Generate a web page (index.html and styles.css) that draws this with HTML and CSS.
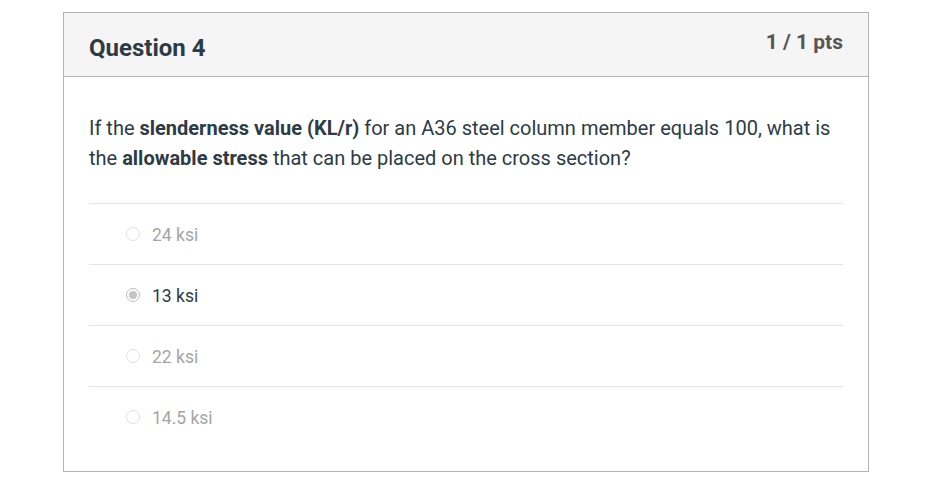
FILE: index.html
```html
<!DOCTYPE html>
<html>
<head>
<meta charset="utf-8">
<link rel="stylesheet" href="styles.css">
</head>
<body>
<div class="card">
  <div class="card-header">
    <h2 class="title">Question 4</h2>
    <div class="pts">1 / 1 pts</div>
  </div>
  <div class="card-body">
    <p class="question">If the <strong>slenderness value (KL/r)</strong> for an A36 steel column member equals 100, what is the <strong>allowable stress</strong> that can be placed on the cross section?</p>
    <div class="answers">
      <div class="answer"><span class="radio"></span><span class="label">24 ksi</span></div>
      <div class="answer selected"><span class="radio"></span><span class="label">13 ksi</span></div>
      <div class="answer"><span class="radio"></span><span class="label">22 ksi</span></div>
      <div class="answer"><span class="radio"></span><span class="label">14.5 ksi</span></div>
    </div>
  </div>
</div>
</body>
</html>
```

FILE: styles.css
```css
html, body {
  margin: 0;
  padding: 0;
  background: #fff;
}
body {
  font-family: Roboto, "Liberation Sans", sans-serif;
  color: #2d3b45;
}
.card {
  margin: 12px 0 0 63px;
  width: 804px;
  border: 1px solid #b3b3b3;
}
.card-header {
  background: #f5f5f5;
  border-bottom: 1px solid #b3b3b3;
  height: 63px;
  padding: 0 25px;
  display: flex;
  justify-content: space-between;
  align-items: flex-start;
}
.title {
  margin: 0;
  padding-top: 19px;
  font-size: 24px;
  line-height: 32px;
  font-weight: 700;
  color: #2d3b45;
}
.pts {
  padding-top: 15px;
  font-size: 21px;
  line-height: 28px;
  font-weight: 700;
  color: #555;
}
.card-body {
  padding: 36px 25px 24px;
}
.question {
  margin: 0 0 30px;
  font-size: 20px;
  line-height: 30px;
  color: #2d3b45;
}
.question strong {
  font-weight: 700;
}
.answer {
  border-top: 1px solid #e6e6e6;
  padding: 16px 0 14px 37px;
  display: flex;
  align-items: center;
  font-size: 17.5px;
  line-height: 30px;
  color: #a5a5a5;
}
.radio {
  width: 14px;
  height: 14px;
  border: 1px solid #e0e0e0;
  border-radius: 50%;
  box-sizing: border-box;
  margin-right: 12px;
  margin-top: -3px;
  background: #fff;
  position: relative;
}
.answer.selected {
  color: #2d3b45;
}
.answer.selected .radio {
  border-color: #bdbdbd;
}
.answer.selected .radio::after {
  content: "";
  position: absolute;
  left: 2px;
  top: 2px;
  width: 8px;
  height: 8px;
  border-radius: 50%;
  background: #c4c4c4;
}
```
